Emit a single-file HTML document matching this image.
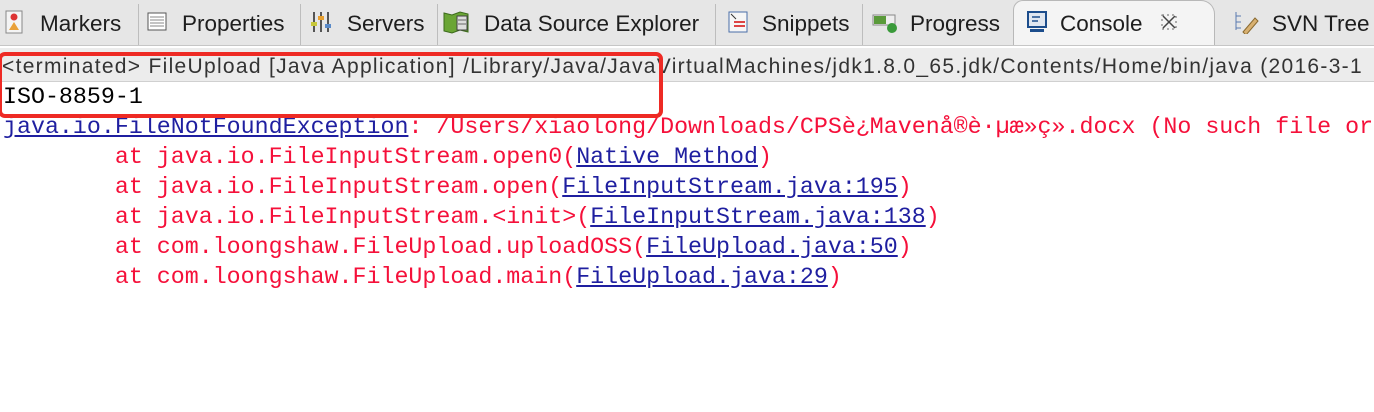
<!DOCTYPE html>
<html><head><meta charset="utf-8"><style>
body{margin:0;width:1374px;height:412px;background:#fff;position:relative;overflow:hidden;font-family:"Liberation Sans",sans-serif}
.tabs{position:absolute;left:0;top:0;width:1374px;height:45px;background:#e6e6e6;border-bottom:1px solid #c6c6c6;overflow:hidden}
.tab{position:absolute;top:0;height:45px;font-size:22.5px;color:#1e1e1e;line-height:48px;white-space:nowrap}
.sep{position:absolute;top:4px;width:1px;height:41px;background:#bdbdbd}
.active{position:absolute;left:1013px;top:0;width:200px;height:46px;background:#f4f4f4;border:1px solid #b8b8b8;border-bottom:none;border-radius:10px 14px 0 0}
.hdr{position:absolute;left:0;top:48px;width:1374px;height:33px;background:#ececec;border-bottom:1px solid #d0d0d0;font-size:21px;letter-spacing:1.3px;color:#333;line-height:38px;white-space:nowrap;padding-left:2px;overflow:hidden}
.con{position:absolute;left:3px;top:82px;width:1371px;overflow:hidden;font-family:"Liberation Mono",monospace;font-size:23.3px;line-height:30px;white-space:pre;color:#000}
.r{color:#f5103a}.l{color:#1f1fa0;text-decoration:underline}
.box{position:absolute;left:-2px;top:52px;width:657px;height:58px;border:4px solid #ee2a24;border-radius:7px}
.ic{position:absolute;top:10px;width:22px;height:24px}
</style></head><body>
<div class="tabs">
<div class="active"></div>
<svg class="ic" style="left:4px" viewBox="0 0 22 24"><rect x="2" y="1" width="16" height="22" fill="#f4f4f4" stroke="#888"/><circle cx="10" cy="7" r="3.5" fill="#d33"/><path d="M5 20l5-8 5 8z" fill="#e9a13a"/></svg>
<div class="tab" style="left:40px">Markers</div><div class="sep" style="left:138px"></div>
<svg class="ic" style="left:146px" viewBox="0 0 22 24"><rect x="2" y="3" width="18" height="17" fill="#fff" stroke="#555"/><path d="M4 7h14M4 10h14M4 13h14M4 16h14" stroke="#888"/></svg>
<div class="tab" style="left:182px">Properties</div><div class="sep" style="left:300px"></div>
<svg class="ic" style="left:310px" viewBox="0 0 22 24"><path d="M4 2v20M11 2v20M18 2v20" stroke="#555" stroke-width="2"/><rect x="1" y="12" width="6" height="4" fill="#c8c83a"/><rect x="8" y="6" width="6" height="4" fill="#e8a030"/><rect x="15" y="14" width="6" height="4" fill="#5a8ac8"/></svg>
<div class="tab" style="left:347px">Servers</div><div class="sep" style="left:437px"></div>
<svg class="ic" style="left:443px;width:32px" viewBox="0 0 32 24"><path d="M1 3l8 2 8-3 8 2v18l-8-2-8 3-8-2z" fill="#6aa535" stroke="#3c6b1c"/><rect x="14" y="6" width="10" height="14" fill="#ddd" stroke="#444"/><path d="M15 10h8M15 14h8" stroke="#666"/></svg>
<div class="tab" style="left:484px">Data Source Explorer</div><div class="sep" style="left:715px"></div>
<svg class="ic" style="left:727px" viewBox="0 0 22 24"><rect x="2" y="2" width="18" height="20" fill="#f6f6f6" stroke="#4a6fa8"/><path d="M7 12h11M7 16h11" stroke="#d44" stroke-width="2"/><path d="M4 4l5 5" stroke="#333"/></svg>
<div class="tab" style="left:762px">Snippets</div><div class="sep" style="left:862px"></div>
<svg class="ic" style="left:872px;width:28px" viewBox="0 0 28 24"><rect x="1" y="5" width="22" height="10" fill="#eee" stroke="#888"/><rect x="2" y="6" width="12" height="8" fill="#5a9a3a"/><circle cx="20" cy="18" r="5" fill="#3a9a3a"/></svg>
<div class="tab" style="left:910px">Progress</div>
<svg class="ic" style="left:1026px" viewBox="0 0 22 24"><rect x="2" y="2" width="18" height="15" fill="#dfe6f0" stroke="#1c4d8c" stroke-width="2"/><path d="M6 7h8M6 11h6" stroke="#1c4d8c" stroke-width="1.5"/><rect x="4" y="19" width="14" height="3" fill="#1c4d8c"/></svg>
<div class="tab" style="left:1060px">Console</div>
<svg class="ic" style="left:1160px;top:13px;width:18px;height:18px" viewBox="0 0 18 18"><path d="M3 3l12 12M15 3L3 15" stroke="#444" stroke-width="1.5"/><rect x="2" y="2" width="14" height="14" fill="none" stroke="#666" stroke-dasharray="2 3"/></svg>
<svg class="ic" style="left:1233px;width:28px" viewBox="0 0 28 24"><path d="M3 2v18M3 6h5M3 12h5M3 18h5" stroke="#5a7ab0"/><path d="M10 22l12-14 3 3-12 14z" fill="#d8b070" stroke="#8a6a30"/></svg>
<div class="tab" style="left:1272px">SVN Tree</div>
</div>
<div class="hdr">&lt;terminated&gt; FileUpload [Java Application] /Library/Java/JavaVirtualMachines/jdk1.8.0_65.jdk/Contents/Home/bin/java (2016-3-1</div>
<div class="con">ISO-8859-1
<span class="l">java.io.FileNotFoundException</span><span class="r">: /Users/xiaolong/Downloads/CPSè¿Mavenå®è·µæ»ç».docx (No such file or directory)</span>
<span class="r">        at java.io.FileInputStream.open0(</span><span class="l">Native Method</span><span class="r">)</span>
<span class="r">        at java.io.FileInputStream.open(</span><span class="l">FileInputStream.java:195</span><span class="r">)</span>
<span class="r">        at java.io.FileInputStream.&lt;init&gt;(</span><span class="l">FileInputStream.java:138</span><span class="r">)</span>
<span class="r">        at com.loongshaw.FileUpload.uploadOSS(</span><span class="l">FileUpload.java:50</span><span class="r">)</span>
<span class="r">        at com.loongshaw.FileUpload.main(</span><span class="l">FileUpload.java:29</span><span class="r">)</span></div>
<div class="box"></div>
</body></html>
